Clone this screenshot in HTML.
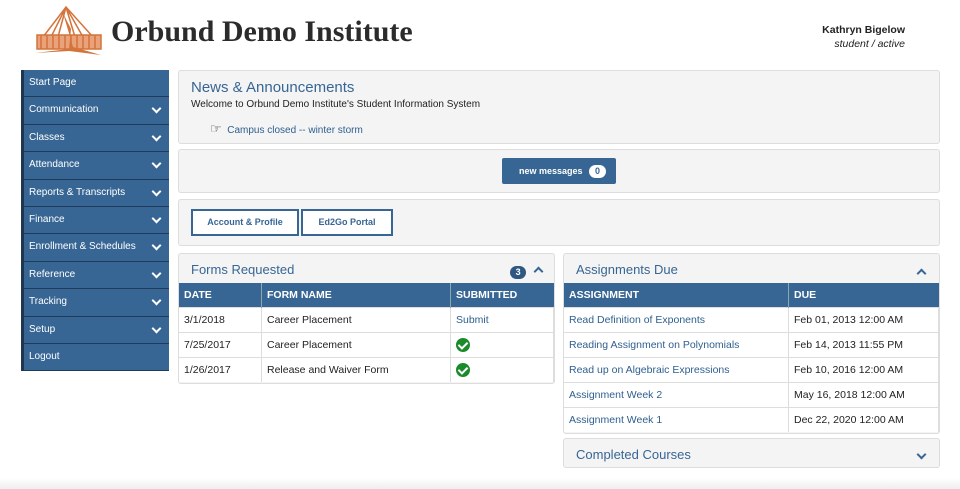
<!DOCTYPE html><html><head><style>
body{margin:0;width:960px;height:489px;background:#fff;font-family:"Liberation Sans",sans-serif;position:relative;overflow:hidden}
.a{position:absolute}
.side{left:21px;top:70px;width:148px;border-left:3px solid #1f3550;box-sizing:border-box}
.side div{height:26.4px;border-bottom:1px solid #1f3a5a;background:#376694;color:#fff;font-size:10px;line-height:26.4px;padding-left:5px;position:relative}
.side div i{position:absolute;right:9px;top:8px;width:5px;height:5px;border-right:2px solid #fff;border-bottom:2px solid #fff;transform:rotate(45deg)}
.pan{background:#f4f4f4;border:1px solid #ddd;border-radius:3px;box-sizing:border-box}
.ttl{color:#376694;font-size:13px}
table{border-collapse:collapse;width:100%;font-size:10.5px}
th{background:#376694;color:#fff;text-align:left;padding:0 5px;height:24px;border-right:1px solid #8aa;font-size:10.5px}
td{background:#fff;height:24px;padding:0 5px;border-top:1px solid #ddd;border-right:1px solid #ddd;color:#222}
a{color:#2e5f8f;text-decoration:none}
.chk{display:inline-block;width:14px;height:14px;border-radius:50%;background:#1a8a2a;position:relative;vertical-align:middle}
.chk:after{content:"";position:absolute;left:4px;top:2px;width:4px;height:7px;border-right:2px solid #fff;border-bottom:2px solid #fff;transform:rotate(45deg)}
.btn{position:absolute;top:9px;border:2px solid #376694;background:#fff;color:#376694;font-size:9px;font-weight:bold;text-align:center;line-height:23px;box-sizing:border-box;height:27px}
.up{display:inline-block;width:5px;height:5px;border-left:2px solid #376694;border-top:2px solid #376694;transform:rotate(45deg)}
</style></head><body>
<svg class="a" style="left:33px;top:5px" width="80" height="52" viewBox="0 0 80 52"><g stroke="#d4733a" fill="none" stroke-width="1.5"><path d="M10 32 L33 2 L60 32"/><path d="M33 2 L25 32 M33 2 L42 32 M33 2 L18 32 M33 2 L50 32"/><rect x="4" y="30" width="64" height="14" fill="#e9a27a"/><path d="M8 30v14M14 30v14M20 30v14M26 30v14M32 30v14M38 30v14M44 30v14M50 30v14M56 30v14M62 30v14"/></g><path d="M30 8 L38 24 L36 44 L2 48 L36 46 L68 50 L40 42 Z" fill="#d4733a"/></svg>
<div class="a" style="left:111px;top:15px;font-family:'Liberation Serif',serif;font-weight:bold;font-size:30px;color:#2b2b2b">Orbund Demo Institute</div>
<div class="a" style="left:780px;top:24px;width:125px;text-align:right;font-size:10.5px;color:#222"><b>Kathryn Bigelow</b><br><i style="line-height:17px">student / active</i></div>
<div class="a side"><div>Start Page</div><div>Communication<i></i></div><div>Classes<i></i></div><div>Attendance<i></i></div><div>Reports &amp; Transcripts<i></i></div><div>Finance<i></i></div><div>Enrollment &amp; Schedules<i></i></div><div>Reference<i></i></div><div>Tracking<i></i></div><div>Setup<i></i></div><div>Logout</div></div>
<div class="a pan" style="left:178px;top:70px;width:762px;height:74px">
<div class="a ttl" style="left:12px;top:8px;font-size:15px">News &amp; Announcements</div>
<div class="a" style="left:12px;top:28px;font-size:10px;color:#222">Welcome to Orbund Demo Institute's Student Information System</div>
<div class="a" style="left:31px;top:50px;font-size:10px;color:#222"><span style="font-size:13px">☞</span> &nbsp;<a>Campus closed -- winter storm</a></div></div>
<div class="a pan" style="left:178px;top:149px;width:762px;height:44px">
<div class="a" style="left:323px;top:8px;width:114px;height:26px;background:#376694;border-radius:2px;color:#fff;font-size:9px;font-weight:bold;line-height:26px;padding-left:17px;box-sizing:border-box">new messages <span style="display:inline-block;background:#fff;color:#376694;border-radius:8px;width:17px;height:13px;line-height:13px;text-align:center;margin-left:4px">0</span></div></div>
<div class="a pan" style="left:178px;top:199px;width:762px;height:47px">
<div class="btn" style="left:12px;width:108px">Account &amp; Profile</div><div class="btn" style="left:122px;width:92px">Ed2Go Portal</div></div>
<div class="a pan" style="left:178px;top:253px;width:377px;height:131px">
<div class="a ttl" style="left:12px;top:8px">Forms Requested</div>
<div class="a" style="right:12px;top:8px"><span style="display:inline-block;background:#2e5782;color:#fff;border-radius:8px;width:16px;height:13px;font-size:9px;text-align:center;line-height:13px;font-weight:bold">3</span>&nbsp;&nbsp;<span class="up"></span></div>
<table class="a" style="left:0;top:29px;width:375px"><tr><th style="width:72px">DATE</th><th style="width:178px">FORM NAME</th><th style="border-right:0">SUBMITTED</th></tr>
<tr><td>3/1/2018</td><td>Career Placement</td><td><a>Submit</a></td></tr>
<tr><td>7/25/2017</td><td>Career Placement</td><td><span class="chk"></span></td></tr>
<tr><td>1/26/2017</td><td>Release and Waiver Form</td><td><span class="chk"></span></td></tr></table></div>
<div class="a pan" style="left:563px;top:253px;width:377px;height:181px">
<div class="a ttl" style="left:12px;top:8px">Assignments Due</div>
<div class="a" style="right:14px;top:10px"><span class="up"></span></div>
<table class="a" style="left:0;top:29px;width:375px"><tr><th style="width:214px">ASSIGNMENT</th><th style="border-right:0">DUE</th></tr>
<tr><td><a>Read Definition of Exponents</a></td><td>Feb 01, 2013 12:00 AM</td></tr>
<tr><td><a>Reading Assignment on Polynomials</a></td><td>Feb 14, 2013 11:55 PM</td></tr>
<tr><td><a>Read up on Algebraic Expressions</a></td><td>Feb 10, 2016 12:00 AM</td></tr>
<tr><td><a>Assignment Week 2</a></td><td>May 16, 2018 12:00 AM</td></tr>
<tr><td><a>Assignment Week 1</a></td><td>Dec 22, 2020 12:00 AM</td></tr></table></div>
<div class="a pan" style="left:563px;top:438px;width:377px;height:30px">
<div class="a ttl" style="left:12px;top:8px">Completed Courses</div>
<div class="a" style="right:14px;top:6px"><span class="up" style="transform:rotate(225deg)"></span></div></div>
<div class="a" style="left:0;top:478px;width:960px;height:11px;background:linear-gradient(#fff,#eee)"></div>
</body></html>
